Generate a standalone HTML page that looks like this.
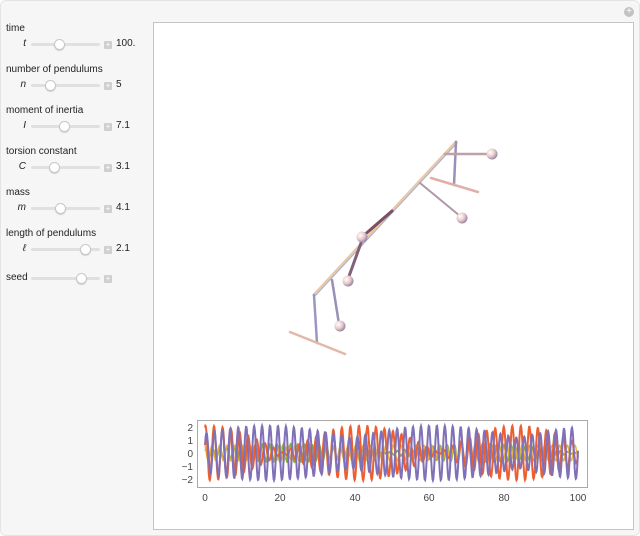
<!DOCTYPE html>
<html><head><meta charset="utf-8"><style>
body{margin:0;width:640px;height:536px;background:#fff;font-family:"Liberation Sans",sans-serif;overflow:hidden}
#outer{position:absolute;left:0;top:0;width:638px;height:534px;border:1px solid #e4e4e4;border-radius:6px;background:#f6f6f6}
#box{position:absolute;left:153px;top:22px;width:479px;height:506px;background:#fff;border:1px solid #c4c4c4}
.lbl{position:absolute;left:6px;font-size:10px;color:#222}
.sym{position:absolute;font-size:10px;font-style:italic;color:#222;text-align:right;width:10px}
.trk{position:absolute;left:31px;width:69px;height:3px;background:#e0e0e0;border-radius:2px}
.knob{position:absolute;width:11px;height:11px;border-radius:50%;background:#fff;border:1px solid #c8c8c8;box-sizing:border-box;box-shadow:0 1px 1px rgba(0,0,0,.15)}
.pl{position:absolute;left:104px;width:8px;height:8px;background:#cfcfcf;border-radius:1px;color:#fff;font-size:8px;line-height:8px;text-align:center}
.val{position:absolute;left:116px;font-size:10px;color:#222}
</style></head><body>
<div id="outer"></div>
<div style="position:absolute;left:624px;top:7px;width:10px;height:10px;border-radius:50%;background:#c2c2c2;color:#fff;font-size:10px;line-height:10px;text-align:center">+</div>
<div id="box"></div>
<div id="ctl"></div>
<svg style="position:absolute;left:0;top:0" width="640" height="536">
<defs><radialGradient id="bg" cx="35%" cy="35%" r="65%"><stop offset="0" stop-color="#fff"/><stop offset=".6" stop-color="#e8c8c8"/><stop offset="1" stop-color="#9a8aa8"/></radialGradient></defs>
<g stroke-linecap="round" fill="none">
<line x1="314" y1="295" x2="456" y2="142" stroke="#e8c8a8" stroke-width="3"/>
<line x1="315" y1="296" x2="457" y2="143" stroke="#a8b0d0" stroke-width="1"/>
<line x1="456" y1="142" x2="454" y2="185" stroke="#9a90b8" stroke-width="2.5"/>
<line x1="431" y1="178" x2="478" y2="192" stroke="#e0b0a8" stroke-width="2.5"/>
<line x1="445" y1="154" x2="490" y2="154" stroke="#c0a0a8" stroke-width="2.5"/>
<line x1="420" y1="183" x2="460" y2="216" stroke="#b098a8" stroke-width="2"/>
<line x1="392" y1="211" x2="362" y2="237" stroke="#7a5060" stroke-width="3"/>
<line x1="361" y1="243" x2="348" y2="279" stroke="#80607a" stroke-width="3"/>
<line x1="332" y1="280" x2="339" y2="324" stroke="#9a90b8" stroke-width="2.5"/>
<line x1="314" y1="295" x2="317" y2="343" stroke="#9a98c0" stroke-width="2.5"/>
<line x1="290" y1="332" x2="345" y2="354" stroke="#e4b8a8" stroke-width="2.5"/>
</g>
<circle cx="492" cy="154" r="5.5" fill="url(#bg)"/>
<circle cx="462" cy="218" r="5.5" fill="url(#bg)"/>
<circle cx="362" cy="237" r="5.5" fill="url(#bg)"/>
<circle cx="348" cy="281" r="5.5" fill="url(#bg)"/>
<circle cx="340" cy="326" r="5.5" fill="url(#bg)"/>
<rect x="197.5" y="420.5" width="390" height="67" fill="none" stroke="#aaa"/>
<g font-size="10" fill="#444" text-anchor="end">
<text x="193" y="431">2</text><text x="193" y="444">1</text><text x="193" y="457">0</text><text x="193" y="470">−1</text><text x="193" y="483">−2</text></g>
<g font-size="10" fill="#444" text-anchor="middle">
<text x="205" y="501">0</text><text x="280" y="501">20</text><text x="355" y="501">40</text><text x="429" y="501">60</text><text x="504" y="501">80</text><text x="578" y="501">100</text></g>
<g id="waves" fill="none" stroke-width="2"></g>
</svg>
<script>
var rows=[["time","t","100.",29,59],["number of pendulums","n","5",70,50],["moment of inertia","I","7.1",111,64],["torsion constant","C","3.1",152,54],["mass","m","4.1",193,60],["length of pendulums","ℓ","2.1",234,85]];
var h="";
rows.forEach(function(r){h+='<div class="lbl" style="top:'+(r[3]-6)+'px">'+r[0]+'</div><div class="sym" style="left:16px;top:'+(r[3]+9)+'px">'+r[1]+'</div><div class="trk" style="top:'+(r[3]+14)+'px"></div><div class="knob" style="left:'+(r[4]-5)+'px;top:'+(r[3]+10)+'px"></div><div class="pl" style="top:'+(r[3]+12)+'px">+</div><div class="val" style="top:'+(r[3]+9)+'px">'+r[2]+'</div>';});
h+='<div class="lbl" style="top:272px">seed</div><div class="trk" style="top:277px"></div><div class="knob" style="left:76px;top:273px"></div><div class="pl" style="top:275px">+</div>';
document.getElementById("ctl").innerHTML=h;
function path(f,col,w){var d="";for(var i=0;i<=1000;i++){var t=i/10,x=205+t*3.73,y=453-f(t)*13;d+=(i?"L":"M")+x.toFixed(1)+" "+y.toFixed(1);}return '<path d="'+d+'" stroke="'+col+'" stroke-width="'+w+'"/>';}
var g="";
g+=path(function(t){return 0.7*Math.sin(3.3*t+1)*Math.abs(Math.sin(t*0.06+0.3))},"#8ab040",2);
g+=path(function(t){return 0.6*Math.sin(3.1*t+2)},"#e8b040",1.5);
g+=path(function(t){return 2.1*Math.sin(2.75*t+1.2)*Math.abs(Math.cos(t*0.075))},"#ec6030",2);
g+=path(function(t){return 2.1*Math.sin(2.95*t+0.4)*(0.55+0.45*Math.abs(Math.sin(t*0.07+0.4)))},"#8070b8",2);
document.getElementById("waves").innerHTML=g;
</script>
</body></html>
